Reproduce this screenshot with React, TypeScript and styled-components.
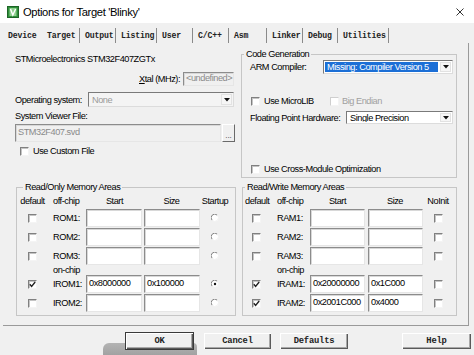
import React from "react";
import styled, { createGlobalStyle } from "styled-components";

const Global = createGlobalStyle`
  html, body { margin: 0; padding: 0; background: #f0f0f0; }
  * { box-sizing: border-box; }
`;

const UI_FONT = `"Liberation Sans", Arial, sans-serif`;
const MONO = `"Liberation Mono", "DejaVu Sans Mono", monospace`;

const Window = styled.div`
  position: relative;
  width: 474px;
  height: 355px;
  overflow: hidden;
  background: #f0f0f0;
  font-family: ${UI_FONT};
  font-size: 9.2px;
  letter-spacing: -0.45px;
  color: #000;
  display: flex;
  flex-direction: column;
`;

const TitleBar = styled.div`
  height: 23px;
  flex: none;
  background: #fff;
  display: flex;
  align-items: center;
  padding: 0 10px 0 7px;
`;

const Title = styled.span`
  margin-left: 4px;
  font-size: 11.2px;
  letter-spacing: -0.35px;
  flex: 1;
`;

const TabBar = styled.div`
  height: 20px;
  flex: none;
  display: flex;
  align-items: flex-end;
  padding-left: 3px;
`;

const Tab = styled.div<{ $w: number; $noSep?: boolean }>`
  width: ${(p) => p.$w}px;
  height: 15px;
  padding-left: 5px;
  display: flex;
  align-items: center;
  font-family: ${MONO};
  font-weight: bold;
  font-size: 8.2px;
  letter-spacing: -0.15px;
  color: #222;
  border-right: ${(p) => (p.$noSep ? "none" : "1px solid #8a8a8a")};
`;

const Panel = styled.div`
  flex: none;
  margin: 0 5px 0 3px;
  height: 283px;
  border-right: 1px solid #9a9a9a;
  border-bottom: 1px solid #9a9a9a;
  padding: 0 11px 0 12px;
  display: flex;
  flex-direction: column;
`;

const TopSection = styled.div`
  display: flex;
  gap: 6px;
`;

const LeftCol = styled.div`
  width: 220px;
  padding-top: 9px;
  display: flex;
  flex-direction: column;
`;

const Row = styled.div<{ $h: number; $mt?: number; $end?: boolean }>`
  height: ${(p) => p.$h}px;
  margin-top: ${(p) => p.$mt ?? 0}px;
  display: flex;
  align-items: center;
  justify-content: ${(p) => (p.$end ? "flex-end" : "flex-start")};
  white-space: nowrap;
`;

const Label = styled.span<{ $w?: number; $dim?: boolean; $ml?: number }>`
  ${(p) => (p.$w ? `width: ${p.$w}px; flex: none;` : "")}
  margin-left: ${(p) => p.$ml ?? 0}px;
  color: ${(p) => (p.$dim ? "#a0a0a0" : "#000")};
  white-space: nowrap;
`;

const Field = styled.div<{ $w?: number; $h: number; $disabled?: boolean; $ml?: number }>`
  ${(p) => (p.$w ? `width: ${p.$w}px; flex: none;` : "flex: 1;")}
  height: ${(p) => p.$h}px;
  margin-left: ${(p) => p.$ml ?? 0}px;
  background: ${(p) => (p.$disabled ? "#f0f0f0" : "#fff")};
  border-style: solid;
  border-width: 1px;
  border-color: #8c8c8c #e6e6e6 #e6e6e6 #8c8c8c;
  box-shadow: inset 1px 1px 0 #d8d8d8;
  color: ${(p) => (p.$disabled ? "#8a8a8a" : "#000")};
  padding: 0 2px;
  line-height: ${(p) => Math.min(p.$h - 3, 14)}px;
  white-space: nowrap;
  overflow: hidden;
`;

const SelectBox = styled.div<{ $w: number; $h: number; $disabled?: boolean }>`
  width: ${(p) => p.$w}px;
  flex: none;
  height: ${(p) => p.$h}px;
  display: flex;
  background: ${(p) => (p.$disabled ? "#f4f4f4" : "#fff")};
  border-style: solid;
  border-width: 1px;
  border-color: #7a7a7a #dcdcdc #dcdcdc #7a7a7a;
  padding: 1px;
`;

const SelectValue = styled.div<{ $sel?: boolean; $disabled?: boolean }>`
  flex: 1;
  display: flex;
  align-items: center;
  padding-left: 2px;
  background: ${(p) => (p.$sel ? "#1c6fd6" : "transparent")};
  color: ${(p) => (p.$sel ? "#fff" : p.$disabled ? "#9a9a9a" : "#000")};
  margin-right: 2px;
  white-space: nowrap;
  overflow: hidden;
`;

const ArrowBtn = styled.div`
  width: 11px;
  flex: none;
  display: flex;
  align-items: center;
  justify-content: center;
  background: #f6f6f6;
  border: 1px solid #e2e2e2;
`;

const SmallBtn = styled.div`
  width: 13px;
  flex: none;
  margin-left: 1px;
  height: 18px;
  background: #f0f0f0;
  border-style: solid;
  border-width: 1px;
  border-color: #fff #6a6a6a #6a6a6a #fff;
  display: flex;
  align-items: flex-end;
  justify-content: center;
  font-size: 8px;
  line-height: 10px;
  letter-spacing: 0;
  color: #333;
`;

const Group = styled.fieldset<{ $w: number; $mt?: number; $ml?: number }>`
  width: ${(p) => p.$w}px;
  flex: none;
  margin: ${(p) => p.$mt ?? 0}px 0 0 ${(p) => p.$ml ?? 0}px;
  padding: 0;
  min-width: 0;
  border: 1px solid #c6c6c6;
`;

const Legend = styled.legend<{ $ml?: number }>`
  margin-left: ${(p) => p.$ml ?? 2}px;
  padding: 0 2px;
  height: 12px;
  line-height: 12px;
`;

const GroupBody = styled.div<{ $pl: number; $pb?: number }>`
  padding: 0 0 ${(p) => p.$pb ?? 0}px ${(p) => p.$pl}px;
  display: flex;
  flex-direction: column;
`;

const BottomSection = styled.div`
  display: flex;
  gap: 6px;
  margin-top: 3px;
`;

const MemGrid = styled.div<{ $cols: string }>`
  display: grid;
  grid-template-columns: ${(p) => p.$cols};
  grid-auto-rows: auto;
  align-items: start;
`;

const HeadCell = styled.div<{ $left?: number }>`
  height: 16px;
  line-height: 16px;
  text-align: ${(p) => (p.$left !== undefined ? "left" : "center")};
  padding-left: ${(p) => p.$left ?? 0}px;
  white-space: nowrap;
`;

const Cell = styled.div<{ $h: number; $left?: number; $center?: boolean }>`
  height: ${(p) => p.$h}px;
  display: flex;
  align-items: flex-start;
  justify-content: ${(p) => (p.$center ? "center" : "flex-start")};
  padding-left: ${(p) => p.$left ?? 0}px;
  white-space: nowrap;
`;

const CellInner = styled.div<{ $h: number }>`
  height: ${(p) => p.$h}px;
  display: flex;
  align-items: center;
`;

const OnChip = styled.div`
  height: 9px;
  line-height: 9px;
  white-space: nowrap;
`;

const ButtonRow = styled.div`
  position: relative;
  z-index: 1;
  margin-top: 6px;
  height: 18px;
  display: flex;
  padding: 0 2px 0 125px;
`;

const Button = styled.div<{ $w: number; $ml?: number; $default?: boolean; $auto?: boolean }>`
  width: ${(p) => p.$w}px;
  height: 18px;
  margin-left: ${(p) => (p.$auto ? "auto" : `${p.$ml ?? 0}px`)};
  background: #f0f0f0;
  border: 1px solid ${(p) => (p.$default ? "#3a3a3a" : "transparent")};
  box-shadow: inset 1px 1px 0 #fff, inset -1px -1px 0 #5a5a5a, inset -2px -2px 0 #a8a8a8;
  display: flex;
  align-items: center;
  justify-content: center;
  font-family: ${MONO};
  font-weight: bold;
  font-size: 8.8px;
  letter-spacing: -0.2px;
  color: #222;
`;

const Shade = styled.div`
  position: absolute;
  left: 103px;
  top: 343px;
  width: 94px;
  height: 12px;
  border-radius: 6px 4px 0 0;
  background: linear-gradient(#b4b4b4, #a2a2a2);
`;

const CheckBoxBox = styled.span<{ $disabled?: boolean; $ml?: number }>`
  width: 9px;
  height: 9px;
  flex: none;
  margin-left: ${(p) => p.$ml ?? 0}px;
  background: #fff;
  border-style: solid;
  border-width: 1px;
  border-color: ${(p) => (p.$disabled ? "#cfcfcf #f4f4f4 #f4f4f4 #cfcfcf" : "#808080 #f4f4f4 #f4f4f4 #808080")};
  box-shadow: ${(p) => (p.$disabled ? "none" : "inset 1px 1px 0 #c4c4c4")};
  display: flex;
  align-items: center;
  justify-content: center;
`;

function CheckBox({ checked, disabled, ml }: { checked?: boolean; disabled?: boolean; ml?: number }) {
  return (
    <CheckBoxBox $disabled={disabled} $ml={ml}>
      {checked && (
        <svg width="7" height="7" viewBox="0 0 7 7">
          <polyline points="0.8,3.2 2.6,5.4 6.2,1" fill="none" stroke="#222" strokeWidth="1.4" />
        </svg>
      )}
    </CheckBoxBox>
  );
}

function Radio({ on }: { on?: boolean }) {
  return (
    <svg width="8" height="8" viewBox="0 0 8 8">
      <circle cx="4" cy="4" r="3.3" fill="#fff" />
      <path d="M1.2 6.3 A3.3 3.3 0 0 1 6.3 1.2" fill="none" stroke="#808080" strokeWidth="1" />
      <path d="M6.3 1.2 A3.3 3.3 0 0 1 1.2 6.3" fill="none" stroke="#f2f2f2" strokeWidth="1" />
      {on && <circle cx="4" cy="4" r="1.2" fill="#111" />}
    </svg>
  );
}

function Arrow() {
  return (
    <svg width="6" height="4" viewBox="0 0 6 4">
      <polygon points="0,0 6,0 3,3.5" fill="#111" />
    </svg>
  );
}

function Select({ w, h, value, sel, disabled }: { w: number; h: number; value: string; sel?: boolean; disabled?: boolean }) {
  return (
    <SelectBox $w={w} $h={h} $disabled={disabled}>
      <SelectValue $sel={sel} $disabled={disabled}>{value}</SelectValue>
      <ArrowBtn>
        <Arrow />
      </ArrowBtn>
    </SelectBox>
  );
}

type MemRowData = { name: string; start: string; size: string; def?: boolean; flag?: boolean };

function MemTable({
  cols,
  heads,
  rows,
  onchip,
  radio,
  offLeft,
  startMl,
  sizeMl,
  inW,
}: {
  cols: string;
  heads: string[];
  rows: MemRowData[];
  onchip: MemRowData[];
  radio?: boolean;
  offLeft: number;
  startMl: number;
  sizeMl: number;
  inW: number;
}) {
  const renderRow = (r: MemRowData) => (
    <React.Fragment key={r.name}>
      <Cell $h={19} $center>
        <CellInner $h={18}>
          <CheckBox checked={r.def} />
        </CellInner>
      </Cell>
      <Cell $h={19} $left={offLeft}>
        <CellInner $h={18}>{r.name}</CellInner>
      </Cell>
      <Cell $h={19}>
        <Field $w={inW} $h={18} $ml={startMl}>{r.start}</Field>
      </Cell>
      <Cell $h={19}>
        <Field $w={inW} $h={18} $ml={sizeMl}>{r.size}</Field>
      </Cell>
      <Cell $h={19} $center>
        <CellInner $h={18}>{radio ? <Radio on={r.flag} /> : <CheckBox checked={r.flag} />}</CellInner>
      </Cell>
    </React.Fragment>
  );
  return (
    <MemGrid $cols={cols}>
      <HeadCell>{heads[0]}</HeadCell>
      <HeadCell $left={offLeft}>{heads[1]}</HeadCell>
      <HeadCell>{heads[2]}</HeadCell>
      <HeadCell>{heads[3]}</HeadCell>
      <HeadCell>{heads[4]}</HeadCell>
      {rows.map(renderRow)}
      <div />
      <Cell $h={9} $left={offLeft}>
        <OnChip>on-chip</OnChip>
      </Cell>
      <div />
      <div />
      <div />
      {onchip.map(renderRow)}
    </MemGrid>
  );
}

const tabs: [string, number][] = [
  ["Device", 39],
  ["Target", 38],
  ["Output", 36],
  ["Listing", 41],
  ["User", 36],
  ["C/C++", 36],
  ["Asm", 38],
  ["Linker", 36],
  ["Debug", 35],
  ["Utilities", 51],
];

export default function App() {
  return (
    <>
      <Global />
      <Window>
        <TitleBar>
          <svg width="12" height="12" viewBox="0 0 12 12">
            <rect x="0.5" y="0.5" width="11" height="11" fill="#2f8f3a" stroke="#1d6426" />
            <rect x="2.5" y="2" width="7" height="8" fill="#8fd08f" />
            <path d="M3.5 3 L5.8 9 L8.6 3" fill="none" stroke="#fff" strokeWidth="1.4" />
          </svg>
          <Title>Options for Target 'Blinky'</Title>
          <svg width="8" height="8" viewBox="0 0 8 8">
            <path d="M0.5 0.5 L7.5 7.5 M7.5 0.5 L0.5 7.5" stroke="#333" strokeWidth="1" />
          </svg>
        </TitleBar>

        <TabBar>
          {tabs.map(([t, w]) => (
            <Tab key={t} $w={w} $noSep={t === "Device"}>
              {t}
            </Tab>
          ))}
        </TabBar>

        <Panel>
          <TopSection>
            <LeftCol>
              <Row $h={14}>STMicroelectronics STM32F407ZGTx</Row>
              <Row $h={14} $mt={6} $end>
                <Label>
                  <u>X</u>tal (MHz):
                </Label>
                <Field $w={51} $h={14} $ml={3} $disabled>
                  &lt;undefined&gt;
                </Field>
                <span style={{ width: 1 }} />
              </Row>
              <Row $h={15} $mt={6}>
                <Label $w={73}>Operating system:</Label>
                <Select w={146} h={15} value="None" disabled />
              </Row>
              <Row $h={12} $mt={3}>
                System Viewer File:
              </Row>
              <Row $h={18} $mt={2}>
                <Field $h={18} $disabled>
                  STM32F407.svd
                </Field>
                <SmallBtn>...</SmallBtn>
              </Row>
              <Row $h={12} $mt={3}>
                <CheckBox ml={5} />
                <Label $ml={4}>Use Custom File</Label>
              </Row>
            </LeftCol>

            <Group $w={216} $mt={5}>
              <Legend $ml={2}>Code Generation</Legend>
              <GroupBody $pl={8} $pb={2}>
                <Row $h={14}>
                  <Label $w={73}>ARM Compiler:</Label>
                  <Select w={130} h={14} value="Missing: Compiler Version 5" sel />
                </Row>
                <Row $h={12} $mt={21}>
                  <CheckBox ml={1} />
                  <Label $w={66} $ml={4}>
                    Use MicroLIB
                  </Label>
                  <CheckBox disabled />
                  <Label $ml={3} $dim>
                    Big Endian
                  </Label>
                </Row>
                <Row $h={13} $mt={4}>
                  <Label $w={96}>Floating Point Hardware:</Label>
                  <Select w={107} h={13} value="Single Precision" />
                </Row>
                <Row $h={12} $mt={39}>
                  <CheckBox ml={1} />
                  <Label $ml={4}>Use Cross-Module Optimization</Label>
                </Row>
              </GroupBody>
            </Group>
          </TopSection>

          <BottomSection>
            <Group $w={220} $ml={1}>
              <Legend $ml={6}>Read/Only Memory Areas</Legend>
              <GroupBody $pl={2} $pb={2}>
                <MemTable
                  cols="27px 40px 57px 57px 30px"
                  heads={["default", "off-chip", "Start", "Size", "Startup"]}
                  offLeft={7}
                  startMl={0}
                  sizeMl={1}
                  inW={56}
                  radio
                  rows={[
                    { name: "ROM1:", start: "", size: "" },
                    { name: "ROM2:", start: "", size: "" },
                    { name: "ROM3:", start: "", size: "" },
                  ]}
                  onchip={[
                    { name: "IROM1:", start: "0x8000000", size: "0x100000", def: true, flag: true },
                    { name: "IROM2:", start: "", size: "" },
                  ]}
                />
              </GroupBody>
            </Group>
            <Group $w={215}>
              <Legend $ml={2}>Read/Write Memory Areas</Legend>
              <GroupBody $pl={2} $pb={2}>
                <MemTable
                  cols="23px 41px 57px 58px 28px"
                  heads={["default", "off-chip", "Start", "Size", "NoInit"]}
                  offLeft={9}
                  startMl={1}
                  sizeMl={2}
                  inW={55}
                  rows={[
                    { name: "RAM1:", start: "", size: "" },
                    { name: "RAM2:", start: "", size: "" },
                    { name: "RAM3:", start: "", size: "" },
                  ]}
                  onchip={[
                    { name: "IRAM1:", start: "0x20000000", size: "0x1C000", def: true },
                    { name: "IRAM2:", start: "0x2001C000", size: "0x4000", def: true },
                  ]}
                />
              </GroupBody>
            </Group>
          </BottomSection>
        </Panel>

        <Shade />
        <ButtonRow>
          <Button $w={69} $default>
            OK
          </Button>
          <Button $w={69} $ml={9}>
            Cancel
          </Button>
          <Button $w={70} $ml={7}>
            Defaults
          </Button>
          <Button $w={71} $auto>
            Help
          </Button>
        </ButtonRow>
      </Window>
    </>
  );
}
